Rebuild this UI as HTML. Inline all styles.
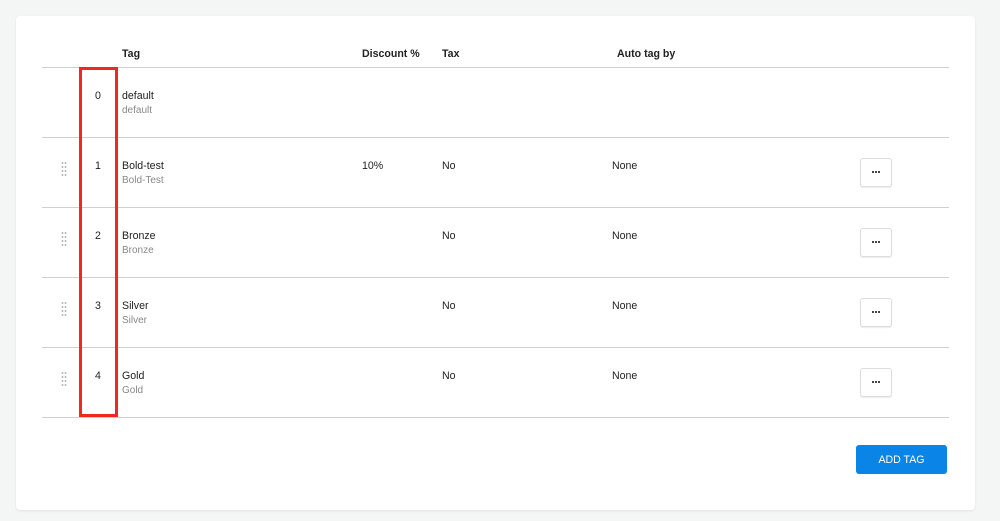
<!DOCTYPE html>
<html><head><style>
body{margin:0;width:1000px;height:521px;background:#f4f5f5;font-family:"Liberation Sans",Arial,sans-serif;position:relative;overflow:hidden}
.card{position:absolute;left:16px;top:16px;width:959px;height:494px;background:#fff;border-radius:4px;box-shadow:0 1px 2px rgba(0,0,0,.08)}
.a{position:absolute;font-size:10.6px;line-height:14px;color:#222;white-space:nowrap}
.h{font-weight:bold;top:47px}
.s{color:#888;font-size:10px;margin-top:1px}
.line{position:absolute;left:42px;width:907px;height:1px;background:#d0d0d0}
.btn{position:absolute;left:860px;width:30px;height:27px;border:1px solid #ddd;border-radius:3px;box-shadow:0 1px 1px rgba(0,0,0,.08);background:#fff}
.btn:after{content:"";position:absolute;left:11px;top:12px;width:2px;height:2px;background:#444;box-shadow:3px 0 #444,6px 0 #444}
.hd{position:absolute;left:61px;width:6px;height:15px;background-image:radial-gradient(circle,#bbb 0.9px,transparent 1.1px);background-size:3px 4px}
</style></head><body>
<div class="card"></div>
<div class="a h" style="left:122px">Tag</div>
<div class="a h" style="left:362px">Discount %</div>
<div class="a h" style="left:442px">Tax</div>
<div class="a h" style="left:617px">Auto tag by</div>
<div class="line" style="top:67px"></div>
<div class="line" style="top:137px"></div>
<div class="line" style="top:207px"></div>
<div class="line" style="top:277px"></div>
<div class="line" style="top:347px"></div>
<div class="line" style="top:417px"></div>

<div class="a" style="left:95px;top:89px">0</div>
<div class="a" style="left:122px;top:89px">default</div>
<div class="a s" style="left:122px;top:103px">default</div>

<div class="hd" style="top:161px"></div>
<div class="a" style="left:95px;top:159px">1</div>
<div class="a" style="left:122px;top:159px">Bold-test</div>
<div class="a s" style="left:122px;top:173px">Bold-Test</div>
<div class="a" style="left:362px;top:159px">10%</div>
<div class="a" style="left:442px;top:159px">No</div>
<div class="a" style="left:612px;top:159px">None</div>
<div class="btn" style="top:158px"></div>

<div class="hd" style="top:231px"></div>
<div class="a" style="left:95px;top:229px">2</div>
<div class="a" style="left:122px;top:229px">Bronze</div>
<div class="a s" style="left:122px;top:243px">Bronze</div>
<div class="a" style="left:442px;top:229px">No</div>
<div class="a" style="left:612px;top:229px">None</div>
<div class="btn" style="top:228px"></div>

<div class="hd" style="top:301px"></div>
<div class="a" style="left:95px;top:299px">3</div>
<div class="a" style="left:122px;top:299px">Silver</div>
<div class="a s" style="left:122px;top:313px">Silver</div>
<div class="a" style="left:442px;top:299px">No</div>
<div class="a" style="left:612px;top:299px">None</div>
<div class="btn" style="top:298px"></div>

<div class="hd" style="top:371px"></div>
<div class="a" style="left:95px;top:369px">4</div>
<div class="a" style="left:122px;top:369px">Gold</div>
<div class="a s" style="left:122px;top:383px">Gold</div>
<div class="a" style="left:442px;top:369px">No</div>
<div class="a" style="left:612px;top:369px">None</div>
<div class="btn" style="top:368px"></div>

<div style="position:absolute;left:79px;top:67px;width:33px;height:344px;border:3px solid #f0281e"></div>

<div style="position:absolute;left:856px;top:445px;width:91px;height:29px;background:#0a84e6;border-radius:3px;color:#fff;font-size:10.6px;line-height:31px;text-align:center">ADD TAG</div>
</body></html>
